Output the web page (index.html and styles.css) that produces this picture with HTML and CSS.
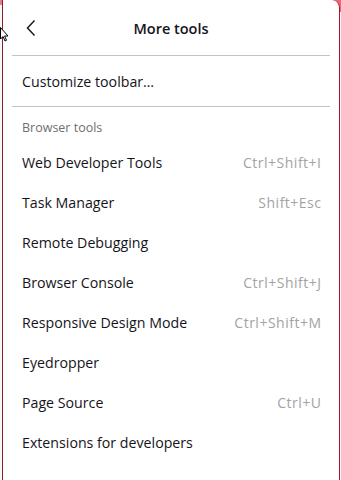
FILE: index.html
```html
<!DOCTYPE html>
<html>
<head>
<meta charset="utf-8">
<link rel="stylesheet" href="styles.css">
</head>
<body>
<div class="corner-left"></div>
<div class="corner-right"></div>
<div class="panel">
  <div class="header">
    <span class="back"><svg width="12" height="18" viewBox="0 0 12 18"><path d="M9.5 1.5 L2.5 9 L9.5 16.5" fill="none" stroke="#1c1b22" stroke-width="1.5"/></svg></span>
    <span class="title">More tools</span>
  </div>
  <div class="sep"></div>
  <div class="item big">Customize toolbar…</div>
  <div class="sep"></div>
  <div class="group">Browser tools</div>
  <div class="item"><span>Web Developer Tools</span><span class="key">Ctrl+Shift+I</span></div>
  <div class="item"><span>Task Manager</span><span class="key">Shift+Esc</span></div>
  <div class="item"><span>Remote Debugging</span></div>
  <div class="item"><span>Browser Console</span><span class="key">Ctrl+Shift+J</span></div>
  <div class="item"><span>Responsive Design Mode</span><span class="key">Ctrl+Shift+M</span></div>
  <div class="item"><span>Eyedropper</span></div>
  <div class="item"><span>Page Source</span><span class="key">Ctrl+U</span></div>
  <div class="item"><span>Extensions for developers</span></div>
</div>
<svg class="cursor" width="9" height="15" viewBox="0 0 9 15"><path d="M0.5 0.5 L0.5 12 L3 9.5 L5 14 L6.5 13.3 L4.6 9 L8 9 Z" fill="#fff" stroke="#000" stroke-width="1"/></svg>
</body>
</html>
```
FILE: styles.css
```css
html, body {
  margin: 0;
  padding: 0;
  background: #f7f7f7;
  height: 480px;
  overflow: hidden;
}
body {
  position: relative;
  font-family: "Open Sans", "Noto Sans", sans-serif;
  color: #15141a;
}
.corner-left {
  position: absolute;
  left: 0; top: 0;
  width: 8px; height: 5px;
  background: #e7808c;
  border-bottom-right-radius: 5px;
}
.corner-right {
  position: absolute;
  right: 0; top: 0;
  width: 12px; height: 12px;
  background: #e86a78;
}
.panel {
  position: relative;
  margin-left: 2px;
  width: 336px;
  height: 480px;
  background: #fff;
  border-left: 1px solid #8a1c2c;
  border-right: 1px solid #b5102a;
  border-top-right-radius: 8px;
  box-sizing: content-box;
}
.header {
  height: 55px;
  display: flex;
  align-items: center;
  justify-content: center;
  position: relative;
}
.back {
  position: absolute;
  left: 22px;
  top: 19px;
  display: flex;
}
.title {
  font-size: 14.5px;
  font-weight: 600;
  margin-top: 1px;
}
.sep {
  height: 1px;
  background: #c4c4c4;
  margin: 0 9px 0 9px;
}
.item {
  height: 40px;
  display: flex;
  align-items: center;
  justify-content: space-between;
  padding: 0 18px 0 19px;
  font-size: 14.2px;
}
.item.big {
  height: 50px;
}
.group {
  height: 35px;
  padding: 0 19px;
  font-size: 12.5px;
  color: #6f6f6f;
  display: flex;
  align-items: flex-end;
  box-sizing: border-box;
  padding-bottom: 6px;
}
.key {
  color: #a3a3a3;
  font-size: 14px;
  letter-spacing: 0.5px;
  margin-right: -0.5px;
}
.cursor {
  position: absolute;
  left: 0;
  top: 27px;
}
```
